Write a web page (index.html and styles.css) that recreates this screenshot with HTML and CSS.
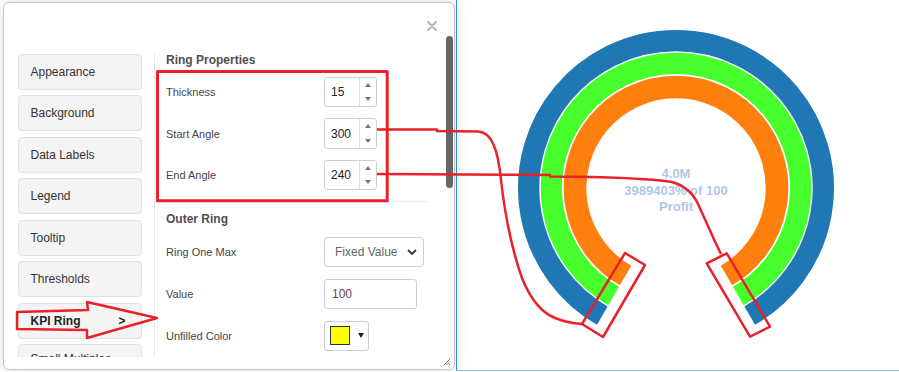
FILE: index.html
```html
<!DOCTYPE html>
<html lang="en">
<head>
    <meta charset="UTF-8">
    <title>KPI Ring Format</title>
    <link rel="stylesheet" href="styles.css">
</head>
<body>
    <div class="workspace">
        <div class="modal">
            <div class="modal-header">
                <button class="close-btn" aria-label="Close">
                    <svg width="10" height="10" viewBox="0 0 10 10"><path d="M1 1 L9 9 M9 1 L1 9" stroke="#bdbdbd" stroke-width="2.4" stroke-linecap="round"/></svg>
                </button>
            </div>
            <div class="modal-body">
                <div class="nav">
                    <div class="nav-btn">Appearance</div>
                    <div class="nav-btn">Background</div>
                    <div class="nav-btn">Data Labels</div>
                    <div class="nav-btn">Legend</div>
                    <div class="nav-btn">Tooltip</div>
                    <div class="nav-btn">Thresholds</div>
                    <div class="nav-btn active">KPI Ring <span>&gt;</span></div>
                    <div class="nav-btn">Small Multiples</div>
                </div>
                <div class="panel">
                    <h3 class="section-title">Ring Properties</h3>
                    <div class="field">
                        <label>Thickness</label>
                        <div class="spin"><span class="spin-value">15</span><span class="spin-btns"><i class="up"></i><i class="down"></i></span></div>
                    </div>
                    <div class="field">
                        <label>Start Angle</label>
                        <div class="spin"><span class="spin-value">300</span><span class="spin-btns"><i class="up"></i><i class="down"></i></span></div>
                    </div>
                    <div class="field">
                        <label>End Angle</label>
                        <div class="spin"><span class="spin-value">240</span><span class="spin-btns"><i class="up"></i><i class="down"></i></span></div>
                    </div>
                    <hr class="sep">
                    <h3 class="section-title">Outer Ring</h3>
                    <div class="field wide">
                        <label>Ring One Max</label>
                        <div class="select">Fixed Value
                            <svg width="10" height="6" viewBox="0 0 10 6"><path d="M1 1 L5 5 L9 1" fill="none" stroke="#333" stroke-width="1.8"/></svg>
                        </div>
                    </div>
                    <div class="field wide">
                        <label>Value</label>
                        <input class="text-input" type="text" value="100">
                    </div>
                    <div class="field wide">
                        <label>Unfilled Color</label>
                        <div class="color-pick"><span class="swatch"></span><span class="caret"></span></div>
                    </div>
                </div>
            </div>
            <div class="scroll-thumb"></div>
            <svg class="grip" width="8" height="8" viewBox="0 0 8 8">
                <path d="M7 1 L1 7 M7 3.5 L3.5 7 M7 6 L6 7" stroke="#777" stroke-width="1"/>
            </svg>
        </div>

        <div class="visual">
            <svg class="kpi-ring" width="441" height="370" viewBox="458 0 441 370">
                <path d="M603.32 315.6 A147.35 147.35 0 1 1 750.68 315.6" fill="none" stroke="#1f77b4" stroke-width="21.3"/>
                <path d="M614.67 295.95 A124.65 124.65 0 1 1 739.33 295.95" fill="none" stroke="#48ff2e" stroke-width="21.3"/>
                <path d="M626.5 275.47 A101 101 0 1 1 727.5 275.47" fill="none" stroke="#ff7f0e" stroke-width="22.6"/>
                <text class="ring-label" x="677" y="177.7">4.0M</text>
                <text class="ring-label" x="677" y="194.7">3989403% of 100</text>
                <text class="ring-label" x="677" y="211.4">Profit</text>
            </svg>
        </div>
    </div>

    <svg class="annotations" width="899" height="372" viewBox="0 0 899 372">
        <rect x="157.5" y="71.5" width="229.7" height="129.3" stroke-width="3"/>
        <path d="M377 129.5 L437 129.5 L437 131 L478 131.5 C492 132 498 150 501 180 C505 215 512 250 522 278 C530 298 540 312 555 318 C565 322 575 323.5 582 324"/>
        <path d="M377 174 L550 175 L550 176.5 Q640 177 672 182 Q690 187 698 204 L708 226 Q714 240 721 254"/>
        <polygon points="625,253 645,265 603,337 582,324"/>
        <polygon points="706.7,263.3 726.7,253.3 770,326.7 750,336.7"/>
        <polygon points="17,312 88,310 87,302 157,318 87,338 87,330 17,329"/>
    </svg>
</body>
</html>
```

FILE: styles.css
```css
* {
    margin: 0;
    padding: 0;
    box-sizing: border-box;
}

body {
    width: 899px;
    height: 372px;
    overflow: hidden;
    position: relative;
    background: #fff;
    font-family: 'Liberation Sans', Arial, sans-serif;
    color: #333;
}

.workspace {
    display: flex;
    height: 100%;
}

.modal {
    position: relative;
    z-index: 2;
    flex: 0 0 452px;
    height: 368px;
    margin: 2px 0 0 3px;
    background: #fff;
    border: 1px solid #c6c6c6;
    border-radius: 6px;
    box-shadow: 0 0 14px rgba(0, 0, 0, 0.14);
}

.modal-header {
    height: 34px;
    display: flex;
    justify-content: flex-end;
    align-items: flex-start;
    padding: 18px 17px 0 0;
}

.close-btn {
    background: none;
    border: none;
    width: 10px;
    height: 10px;
    display: block;
    cursor: pointer;
}

.close-btn svg {
    display: block;
}

.modal-body {
    height: 320px;
    overflow: hidden;
    display: flex;
    padding: 17px 0 0 14px;
}

.nav {
    flex: 0 0 123.5px;
    display: flex;
    flex-direction: column;
    gap: 5.43px;
}

.nav-btn {
    flex: 0 0 36px;
    display: flex;
    align-items: center;
    justify-content: space-between;
    padding: 0 15px 0 11.5px;
    background: #f4f4f4;
    border: 1px solid #e0e0e0;
    border-radius: 4px;
    font-size: 12px;
    color: #333;
}

.nav-btn:last-child {
    align-items: flex-start;
    padding-top: 7px;
}

.nav-btn.active {
    font-weight: bold;
    color: #222;
}

.panel {
    flex: 0 0 276px;
    margin-left: 12.5px;
    border-left: 1px solid #e6e6e6;
    padding-left: 11px;
}

.section-title {
    font-size: 12px;
    line-height: 12px;
    font-weight: bold;
    color: #4f4f4f;
}

.field {
    display: flex;
    align-items: center;
    height: 30.4px;
    margin-top: 11px;
}

.field.wide {
    height: 30.6px;
    margin-top: 11.4px;
}

.field label {
    flex: 0 0 158px;
    font-size: 11px;
    color: #454545;
}

.spin {
    width: 53px;
    height: 100%;
    display: flex;
    border: 1px solid #cfcfcf;
    border-radius: 3px;
}

.spin-value {
    flex: 1;
    display: flex;
    align-items: center;
    padding-left: 6px;
    font-size: 12px;
    color: #222;
}

.spin-btns {
    flex: 0 0 17px;
    border-left: 1px solid #e0e0e0;
    display: flex;
    flex-direction: column;
    align-items: center;
    justify-content: space-between;
    padding: 5px 0;
}

.spin-btns i {
    width: 0;
    height: 0;
    border-left: 3.8px solid transparent;
    border-right: 3.8px solid transparent;
}

.spin-btns .up {
    border-bottom: 4.5px solid #777;
}

.spin-btns .down {
    border-top: 4.5px solid #777;
}

.sep {
    border: none;
    border-top: 1px solid #ececec;
    margin: 10.8px 0 11.3px -11px;
}

.select {
    width: 99.5px;
    height: 100%;
    display: flex;
    align-items: center;
    padding: 0 6px 0 10px;
    border: 1px solid #cfcfcf;
    border-radius: 4px;
    font-size: 12px;
    color: #666;
}

.select svg {
    margin-left: auto;
    display: block;
}

.text-input {
    width: 92.7px;
    height: 100%;
    padding-left: 7px;
    border: 1px solid #cfcfcf;
    border-radius: 3px;
    font-family: inherit;
    font-size: 12px;
    color: #6e3f3f;
    outline: none;
}

.color-pick {
    width: 45.3px;
    height: 100%;
    display: flex;
    align-items: center;
    padding-left: 5px;
    border: 1px solid #cfcfcf;
    border-radius: 3px;
}

.swatch {
    width: 19.5px;
    height: 19px;
    background: #ffff00;
    border: 1px solid #333;
}

.caret {
    margin-left: 8px;
    width: 0;
    height: 0;
    border-left: 3px solid transparent;
    border-right: 3px solid transparent;
    border-top: 5.5px solid #222;
}

.scroll-thumb {
    position: absolute;
    left: 442px;
    top: 33px;
    width: 6.5px;
    height: 152px;
    background: #666;
    border-radius: 3.5px;
}

.grip {
    position: absolute;
    right: 3px;
    bottom: 3px;
}

.visual {
    flex: 1;
    height: 371px;
    margin-left: 1px;
    border-left: 1.5px solid #3a8ee6;
    border-bottom: 1px solid #8dbde9;
}

.kpi-ring {
    display: block;
}

.ring-label {
    font-family: 'Liberation Sans', Arial, sans-serif;
    font-size: 13px;
    font-weight: bold;
    fill: #aec7e8;
    text-anchor: middle;
}

.annotations {
    position: absolute;
    top: 0;
    left: 0;
    z-index: 5;
    pointer-events: none;
}

.annotations rect,
.annotations path,
.annotations polygon {
    fill: none;
    stroke: #e8212a;
    stroke-width: 2.5;
    stroke-linejoin: round;
}

.annotations rect {
    stroke-width: 3;
}
```
